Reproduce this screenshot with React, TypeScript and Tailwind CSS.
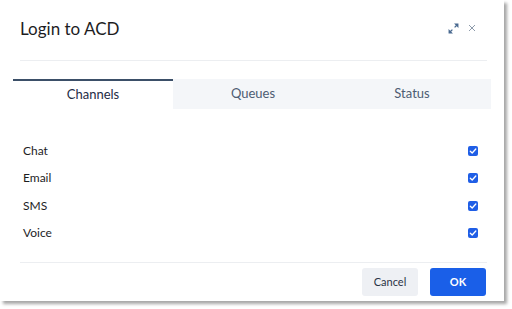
import React from "react";

function Check() {
  return (
    <div className="w-[10px] h-[10px] rounded-[2px] bg-[#1f5ee6] flex items-center justify-center">
      <svg width="8" height="8" viewBox="0 0 8 8">
        <path d="M1.3 4.2 L3.2 6 L6.8 2" stroke="white" strokeWidth="1.3" fill="none" strokeLinecap="round" strokeLinejoin="round" />
      </svg>
    </div>
  );
}

export default function App() {
  const rows = ["Chat", "Email", "SMS", "Voice"];
  return (
    <div className="w-[512px] h-[309px] bg-white" style={{ fontFamily: "Lato, 'Open Sans', sans-serif" }}>
      <div className="w-[504px] h-[301px] bg-white flex flex-col shadow-[3px_3px_3px_rgba(0,0,0,0.35)]">
        <div className="h-[56px] flex items-center pl-[20px] pr-[28px]">
          <div className="text-[17px] text-[#1d1d1f] flex-1 leading-none">Login to ACD</div>
          <svg width="11" height="11" viewBox="0 0 10 10" className="mr-[9px]">
            <path d="M5.5 0.5 H9.5 V4.5 Z" fill="#4a6a90" />
            <path d="M4.5 9.5 H0.5 V5.5 Z" fill="#4a6a90" />
            <path d="M8 2 L6 4 M2 8 L4 6" stroke="#4a6a90" strokeWidth="1.2" />
          </svg>
          <svg width="8" height="8" viewBox="0 0 8 8">
            <path d="M1 1 L7 7 M7 1 L1 7" stroke="#8d9bab" strokeWidth="1" />
          </svg>
        </div>
        <div className="ml-[20px] mr-[17px] h-px bg-[#eceef1] mt-[4px]"></div>
        <div className="mx-[13px] mt-[18px] h-[30px] flex bg-[#f4f6f9] text-[13px]">
          <div className="w-[160px] bg-white border-t-2 border-[#3b4f68] flex items-center justify-center text-[#1e2b45]">Channels</div>
          <div className="w-[160px] flex items-center justify-center text-[#4d5c72]">Queues</div>
          <div className="flex-1 flex items-center justify-center text-[#4d5c72]">Status</div>
        </div>
        <div className="mt-[28px] flex flex-col pl-[23px] pr-[26px]">
          {rows.map((r) => (
            <div key={r} className="h-[27.5px] flex items-center justify-between text-[12px] text-[#1d1d1f]">
              <span>{r}</span>
              <Check />
            </div>
          ))}
        </div>
        <div className="ml-[20px] mr-[17px] h-px bg-[#eceef1] mt-[15px]"></div>
        <div className="flex justify-end gap-[12px] pr-[18px] mt-[5px]">
          <button className="w-[56px] h-[28px] rounded-[3px] bg-[#eef0f4] text-[11px] text-[#2a3345]">Cancel</button>
          <button className="w-[56px] h-[28px] rounded-[3px] bg-[#1a5fe8] text-[11px] font-bold text-white">OK</button>
        </div>
      </div>
    </div>
  );
}
